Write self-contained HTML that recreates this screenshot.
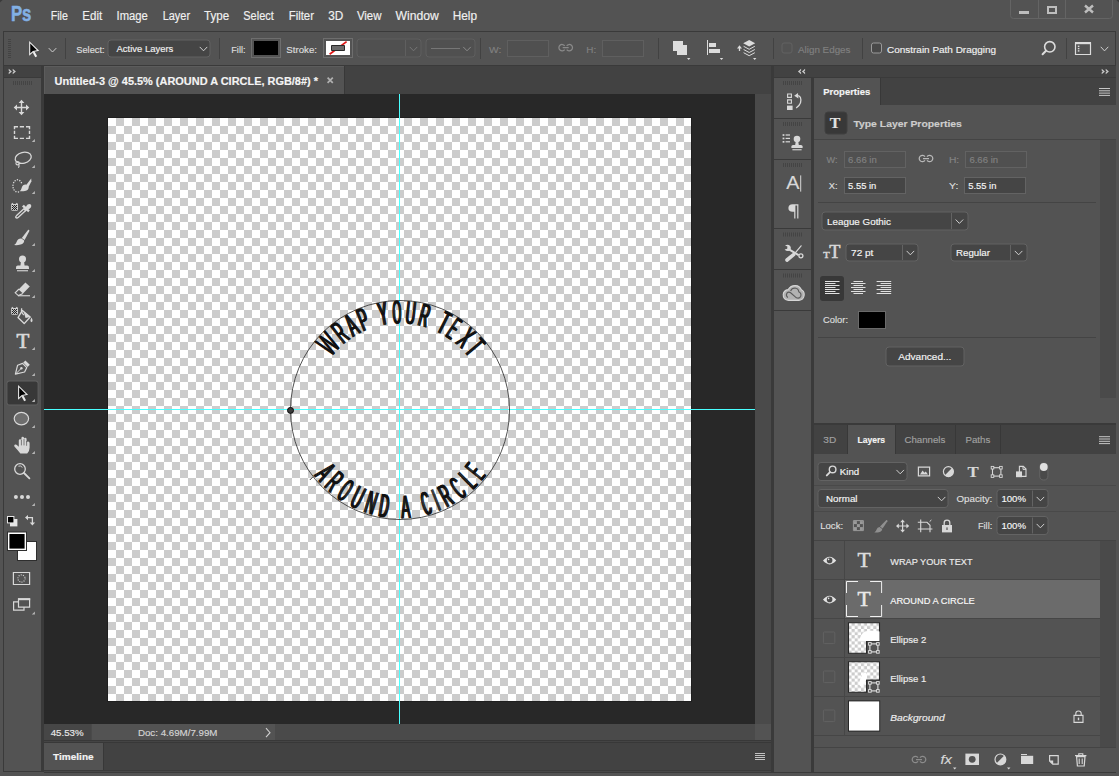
<!DOCTYPE html>
<html lang="en"><head><meta charset="utf-8"><title>Untitled-3 @ 45.5% (AROUND A CIRCLE, RGB/8#) *</title>
<style>
html,body{margin:0;padding:0;background:#535353;overflow:hidden}
#app{position:relative;width:1119px;height:776px;overflow:hidden;background:#535353;font-family:"Liberation Sans",sans-serif}
.p{position:absolute;overflow:hidden}
.p svg{display:block;position:absolute;left:0;top:0}
svg text{font-family:"Liberation Sans",sans-serif;white-space:pre}
svg text.serif{font-family:"Liberation Serif",serif}
.arc{position:absolute;left:0;top:0;width:0;height:0;color:#111;line-height:1;font-family:"Liberation Sans",sans-serif}
.arc span{position:absolute;left:0;top:0;display:block;white-space:pre;transform-origin:0 0}
.arc span.sp{width:0;height:0;overflow:hidden}
</style></head><body><div id="app">
<div class="p menubar" style="left:0px;top:0px;width:1119px;height:31px;background:#535353"><svg width="1119" height="31" viewBox="0 0 1119 31"><path d="M0 0 L2.6 0 L0 2.6 Z" fill="#3a3a3a" /><path d="M1119 0 L1116.4 0 L1119 2.6 Z" fill="#3a3a3a" /><text x="10.9" y="21.2" font-size="22.5" fill="#82b0e4" font-weight="bold" textLength="20.5" lengthAdjust="spacingAndGlyphs" stroke="#82b0e4" stroke-width="0.5">Ps</text><text x="50.7" y="20" font-size="12.3" fill="#f0f0f0" stroke="#f0f0f0" stroke-width="0.16" textLength="17.2" lengthAdjust="spacingAndGlyphs" >File</text><text x="82.3" y="20" font-size="12.3" fill="#f0f0f0" stroke="#f0f0f0" stroke-width="0.16" textLength="19.9" lengthAdjust="spacingAndGlyphs" >Edit</text><text x="116.6" y="20" font-size="12.3" fill="#f0f0f0" stroke="#f0f0f0" stroke-width="0.16" textLength="31.3" lengthAdjust="spacingAndGlyphs" >Image</text><text x="162.7" y="20" font-size="12.3" fill="#f0f0f0" stroke="#f0f0f0" stroke-width="0.16" textLength="27.4" lengthAdjust="spacingAndGlyphs" >Layer</text><text x="204.1" y="20" font-size="12.3" fill="#f0f0f0" stroke="#f0f0f0" stroke-width="0.16" textLength="25.1" lengthAdjust="spacingAndGlyphs" >Type</text><text x="243.3" y="20" font-size="12.3" fill="#f0f0f0" stroke="#f0f0f0" stroke-width="0.16" textLength="30.5" lengthAdjust="spacingAndGlyphs" >Select</text><text x="288.7" y="20" font-size="12.3" fill="#f0f0f0" stroke="#f0f0f0" stroke-width="0.16" textLength="25.3" lengthAdjust="spacingAndGlyphs" >Filter</text><text x="328.3" y="20" font-size="12.3" fill="#f0f0f0" stroke="#f0f0f0" stroke-width="0.16" textLength="15.1" lengthAdjust="spacingAndGlyphs" >3D</text><text x="356.9" y="20" font-size="12.3" fill="#f0f0f0" stroke="#f0f0f0" stroke-width="0.16" textLength="24.6" lengthAdjust="spacingAndGlyphs" >View</text><text x="395.5" y="20" font-size="12.3" fill="#f0f0f0" stroke="#f0f0f0" stroke-width="0.16" textLength="43.3" lengthAdjust="spacingAndGlyphs" >Window</text><text x="452.7" y="20" font-size="12.3" fill="#f0f0f0" stroke="#f0f0f0" stroke-width="0.16" textLength="24.3" lengthAdjust="spacingAndGlyphs" >Help</text><path d="M1010.5 0 V15.5 Q1010.5 18.5 1013.5 18.5 H1109.5 Q1112.5 18.5 1112.5 15.5 V0" fill="none" stroke="#646464" stroke-width="1" /><rect x="1038" y="0" width="1" height="18" fill="#646464"/><rect x="1065" y="0" width="1" height="18" fill="#646464"/><rect x="1019" y="11" width="10" height="3" fill="#bdbdbd" /><path d="M1048 7 H1056 V13 H1048 Z" fill="none" stroke="#bdbdbd" stroke-width="2" /><path d="M1085 5.5 L1093 12.5 M1093 5.5 L1085 12.5" fill="none" stroke="#bdbdbd" stroke-width="2.4" /></svg></div>
<div class="p optionsbar" style="left:0px;top:31px;width:1119px;height:35px;background:#535353"><svg width="1119" height="35" viewBox="0 31 1119 35"><rect x="3" y="31" width="1113" height="35" fill="#3a3a3a" /><rect x="4" y="32" width="1111" height="33" fill="#535353" /><rect x="8" y="39" width="3" height="1" fill="#434343" /><rect x="8" y="41" width="3" height="1" fill="#434343" /><rect x="8" y="43" width="3" height="1" fill="#434343" /><rect x="8" y="45" width="3" height="1" fill="#434343" /><rect x="8" y="47" width="3" height="1" fill="#434343" /><rect x="8" y="49" width="3" height="1" fill="#434343" /><rect x="8" y="51" width="3" height="1" fill="#434343" /><rect x="8" y="53" width="3" height="1" fill="#434343" /><rect x="8" y="55" width="3" height="1" fill="#434343" /><rect x="8" y="57" width="3" height="1" fill="#434343" /><path d="M33.6 52 L36.2 56.8" stroke="#efefef" stroke-width="2.1" fill="none"/><path d="M29.7 42.2 V54.6 L33.1 51.5 L38.1 50.5 Z" fill="#000" stroke="#efefef" stroke-width="1.1" stroke-linejoin="miter"/><path d="M49 48.4 L52.5 52 L56 48.4" fill="none" stroke="#cfcfcf" stroke-width="1" stroke-linecap="round" stroke-linejoin="round"/><rect x="65" y="38" width="1" height="21" fill="#424242"/><rect x="219" y="38" width="1" height="21" fill="#424242"/><rect x="480" y="38" width="1" height="21" fill="#424242"/><rect x="658" y="38" width="1" height="21" fill="#424242"/><rect x="773" y="38" width="1" height="21" fill="#424242"/><rect x="862" y="38" width="1" height="21" fill="#424242"/><rect x="1066" y="38" width="1" height="21" fill="#424242"/><text x="76.2" y="52.5" font-size="9.7" fill="#dddddd" stroke="#dddddd" stroke-width="0.16" textLength="28.5" lengthAdjust="spacingAndGlyphs" >Select:</text><rect x="108" y="40" width="102" height="17" rx="3" fill="#454545" stroke="#636363" stroke-width="1" /><text x="116.5" y="52.3" font-size="9.7" fill="#f0f0f0" stroke="#f0f0f0" stroke-width="0.16" textLength="56.8" lengthAdjust="spacingAndGlyphs" >Active Layers</text><path d="M200 47.2 L203.5 50.8 L207 47.2" fill="none" stroke="#cfcfcf" stroke-width="1" stroke-linecap="round" stroke-linejoin="round"/><text x="231.3" y="52.5" font-size="9.7" fill="#dddddd" stroke="#dddddd" stroke-width="0.16" textLength="14.2" lengthAdjust="spacingAndGlyphs" >Fill:</text><rect x="251.5" y="38.5" width="29" height="19" rx="0" fill="none" stroke="#6e6e6e" stroke-width="1" /><rect x="254" y="41" width="24" height="14" fill="#000" /><text x="286.3" y="52.5" font-size="9.7" fill="#dddddd" stroke="#dddddd" stroke-width="0.16" textLength="30.7" lengthAdjust="spacingAndGlyphs" >Stroke:</text><rect x="323.5" y="38.5" width="29" height="19" rx="0" fill="none" stroke="#6e6e6e" stroke-width="1" /><rect x="326" y="41" width="24" height="14" fill="#fff" /><path d="M329.6 54.2 L346.6 41.6" fill="none" stroke="#e01818" stroke-width="1.8" /><path d="M331.5 45.5 H344.5 V50.5 H331.5 Z" fill="#6b6b6b" stroke="#2a2a2a" stroke-width="1" /><rect x="357" y="39" width="64" height="18" rx="3" fill="#505050" stroke="#5f5f5f" stroke-width="1" /><rect x="405" y="40" width="1" height="16" fill="#5f5f5f"/><path d="M410 47.2 L413.5 50.8 L417 47.2" fill="none" stroke="#767676" stroke-width="1" stroke-linecap="round" stroke-linejoin="round"/><rect x="426" y="39" width="49" height="18" rx="3" fill="#505050" stroke="#5f5f5f" stroke-width="1" /><rect x="431" y="48" width="29" height="1" fill="#767676"/><path d="M463.5 47.2 L467 50.8 L470.5 47.2" fill="none" stroke="#8a8a8a" stroke-width="1" stroke-linecap="round" stroke-linejoin="round"/><text x="489" y="52.5" font-size="9.7" fill="#808080" stroke="#808080" stroke-width="0.16" textLength="12.3" lengthAdjust="spacingAndGlyphs" >W:</text><rect x="507.5" y="40.5" width="41" height="16" rx="0" fill="#505050" stroke="#5f5f5f" stroke-width="1" /><path d="M564.7 45.8 A3.2 3.2 0 1 0 564.7 49.6 M566.7 45.8 A3.2 3.2 0 1 1 566.7 49.6 M562.7 47.7 H568.7" fill="none" stroke="#8a8a8a" stroke-width="1.25"/><text x="586.3" y="52.5" font-size="9.7" fill="#808080" stroke="#808080" stroke-width="0.16" textLength="9.9" lengthAdjust="spacingAndGlyphs" >H:</text><rect x="602.5" y="40.5" width="41" height="16" rx="0" fill="#505050" stroke="#5f5f5f" stroke-width="1" /><rect x="673" y="41" width="10" height="10" fill="#dcdcdc" /><rect x="677" y="45" width="10" height="10" fill="#dcdcdc" /><path d="M687 58 L690.4 58 L688.7 60 Z" fill="#dcdcdc" /><rect x="707" y="40" width="1" height="15" fill="#dcdcdc"/><rect x="709" y="43" width="7" height="4" fill="#dcdcdc" /><rect x="709" y="49" width="11" height="4" fill="#dcdcdc" /><path d="M719.8 58 L723.2 58 L721.5 60 Z" fill="#dcdcdc" /><path d="M739.5 51 V47.5" fill="none" stroke="#dcdcdc" stroke-width="1.3" /><path d="M739.5 45.2 L742 48.4 H737 Z" fill="#dcdcdc" /><path d="M749.2 40 L755.2 43.2 L749.2 46.4 L743.2 43.2 Z" fill="#dcdcdc" /><path d="M743.6 46.3 L749.2 49.3 L754.8 46.3 M743.6 49.5 L749.2 52.5 L754.8 49.5 M743.6 52.7 L749.2 55.7 L754.8 52.7" fill="none" stroke="#dcdcdc" stroke-width="1" /><path d="M753 58 L756.4 58 L754.7 60 Z" fill="#dcdcdc" /><rect x="782" y="43" width="10" height="10" rx="2" fill="none" stroke="#626262" stroke-width="1" /><text x="798" y="52.5" font-size="9.7" fill="#808080" stroke="#808080" stroke-width="0.16" textLength="52.5" lengthAdjust="spacingAndGlyphs" >Align Edges</text><rect x="871.5" y="43" width="10" height="10" rx="2" fill="#484848" stroke="#9a9a9a" stroke-width="1" /><text x="887" y="52.5" font-size="9.7" fill="#f0f0f0" stroke="#f0f0f0" stroke-width="0.16" textLength="109.1" lengthAdjust="spacingAndGlyphs" >Constrain Path Dragging</text><circle cx="1049.8" cy="46.8" r="5.2" fill="none" stroke="#dcdcdc" stroke-width="1.6"/><path d="M1046 50.8 L1042.6 54.3" fill="none" stroke="#dcdcdc" stroke-width="2" stroke-linecap="round"/><path d="M1075.5 43 H1090.5 V54.5 H1075.5 Z" fill="none" stroke="#dcdcdc" stroke-width="1.2" /><rect x="1075" y="42" width="16" height="2.2" fill="#dcdcdc" /><rect x="1077.8" y="45.6" width="1.6" height="1.4" fill="#dcdcdc" /><rect x="1077.8" y="47.9" width="1.6" height="1.4" fill="#dcdcdc" /><rect x="1077.8" y="50.2" width="1.6" height="1.4" fill="#dcdcdc" /><path d="M1101 47.1 L1104.5 50.9 L1108 47.1" fill="none" stroke="#cfcfcf" stroke-width="1" stroke-linecap="round" stroke-linejoin="round"/></svg></div>
<div class="p toolbar" style="left:0px;top:66px;width:44px;height:710px;background:#535353"><svg width="44" height="710" viewBox="0 66 44 710"><rect x="3" y="66" width="41" height="706" fill="#3a3a3a" /><rect x="0" y="66" width="3" height="710" fill="#535353" /><rect x="4" y="66" width="37" height="11" fill="#424242" /><rect x="4" y="78" width="37" height="693" fill="#535353" /><path d="M11.9 71.5 L8.7 68.8 V70.6 L9.8 71.5 L8.7 72.4 V74.2 Z M15.9 71.5 L12.7 68.8 V70.6 L13.8 71.5 L12.7 72.4 V74.2 Z " fill="#c8c8c8"/><rect x="13" y="81" width="1" height="4" fill="#444444"/><rect x="15" y="81" width="1" height="4" fill="#444444"/><rect x="17" y="81" width="1" height="4" fill="#444444"/><rect x="19" y="81" width="1" height="4" fill="#444444"/><rect x="21" y="81" width="1" height="4" fill="#444444"/><rect x="23" y="81" width="1" height="4" fill="#444444"/><rect x="25" y="81" width="1" height="4" fill="#444444"/><rect x="27" y="81" width="1" height="4" fill="#444444"/><rect x="29" y="81" width="1" height="4" fill="#444444"/><rect x="31" y="81" width="1" height="4" fill="#444444"/><path d="M21.5 101.3 V113.7 M15.3 107.5 H27.7" fill="none" stroke="#d8d8d8" stroke-width="1.4" /><path d="M21.5 99.7 l2.9 3.3 h-5.8 Z M21.5 115.3 l2.9 -3.3 h-5.8 Z M13.7 107.5 l3.3 -2.9 v5.8 Z M29.3 107.5 l-3.3 -2.9 v5.8 Z" fill="#d8d8d8" /><path d="M14.5 129.3 V126.7 H18.0 M19.8 126.7 H24.0 M26.0 126.7 H29.5 V129.3 M29.5 130.8 V134.0 M29.5 135.8 V138.4 H26.0 M24.0 138.4 H19.8 M18.0 138.4 H14.5 V135.8 M14.5 134.0 V130.8" fill="none" stroke="#d8d8d8" stroke-width="1.4" /><path d="M34.9 139 L34.9 142.1 L31.8 142.1 Z" fill="#b8b8b8" /><ellipse cx="23.2" cy="157.8" rx="8.2" ry="5.4" fill="none" stroke="#d8d8d8" stroke-width="1.3" transform="rotate(-14 23.2 157.8)"/><circle cx="17.6" cy="163.2" r="1.7" fill="none" stroke="#d8d8d8" stroke-width="1.1"/><path d="M18.8 164.4 Q19.6 166 18.4 167.8" fill="none" stroke="#d8d8d8" stroke-width="1.1" /><path d="M34.9 165 L34.9 168.1 L31.8 168.1 Z" fill="#b8b8b8" /><path d="M21.4 182.6 A4.6 6.1 0 1 0 19.6 191.4" fill="none" stroke="#d8d8d8" stroke-width="1.5" stroke-dasharray="0.01 2.45" stroke-linecap="round"/><path d="M31.2 178.6 L31.4 181.2 L28.6 187 L26 185.2 Z" fill="#d8d8d8" /><path d="M26 184.6 L28.8 186.8 Q28.6 190.6 25 191 Q22 191.6 19.6 191.2 Q21.4 190 21.8 187.6 Q22.6 184.4 26 184.6 Z" fill="#d8d8d8" /><path d="M34.9 191 L34.9 194.1 L31.8 194.1 Z" fill="#b8b8b8" /><path d="M11.2 204.0 L12.399999999999999 202.8 L13.6 204.0 H15.6 L16.799999999999997 202.8 L18.0 204.0 V209.4 Q18.0 210.8 16.6 210.8 H12.6 Q11.2 210.8 11.2 209.4 Z" fill="#d0d0d0"/><rect x="12.1" y="205" width="1" height="1" fill="#111"/><rect x="12.1" y="207" width="1" height="1" fill="#111"/><rect x="12.1" y="209" width="1" height="1" fill="#111"/><rect x="13.1" y="206" width="1" height="1" fill="#111"/><rect x="13.1" y="208" width="1" height="1" fill="#111"/><rect x="14.1" y="205" width="1" height="1" fill="#111"/><rect x="14.1" y="207" width="1" height="1" fill="#111"/><rect x="14.1" y="209" width="1" height="1" fill="#111"/><rect x="15.1" y="206" width="1" height="1" fill="#111"/><rect x="15.1" y="208" width="1" height="1" fill="#111"/><rect x="16.1" y="205" width="1" height="1" fill="#111"/><rect x="16.1" y="207" width="1" height="1" fill="#111"/><rect x="16.1" y="209" width="1" height="1" fill="#111"/><path d="M24.2 208.6 L16.6 215.6 Q15.2 217 16 217.8 Q17 218.4 18.4 217.2 L26 210.2" fill="none" stroke="#d8d8d8" stroke-width="1.3" stroke-linejoin="round"/><path d="M22 206.4 L23.8 204.8 L29.8 210.4 L28.2 212.2 Z" fill="#d8d8d8" /><path d="M23.4 209.4 L26.2 206.4 L28.4 208.6 L25.6 211.6 Z" fill="#d8d8d8" /><path d="M26 206.6 L27.6 204.6 Q29.4 203.2 30.8 204.6 Q32 206 30.6 207.8 L28.6 209.4 Z" fill="#d8d8d8" /><path d="M28.2 229.8 Q29.4 229.6 29.4 231 L24.6 240 L21.8 238 Z" fill="#d8d8d8" /><path d="M21.4 238.4 L24.2 240.6 Q24.2 243.6 20.6 244.6 Q17 245.4 14.2 245 Q16.2 243.8 16.8 241.6 Q17.8 238.2 21.4 238.4 Z" fill="#d8d8d8" /><path d="M34.9 243 L34.9 246.1 L31.8 246.1 Z" fill="#b8b8b8" /><circle cx="22.5" cy="258.9" r="3.5" fill="#d8d8d8"/><path d="M21 261 H24 L24.6 266 H20.4 Z" fill="#d8d8d8" /><path d="M16 269 V267.4 Q16 265.6 17.8 265.6 H27.2 Q29 265.6 29 267.4 V269 Z" fill="#d8d8d8" /><rect x="17" y="270.2" width="11" height="1.1" fill="#d8d8d8" /><path d="M34.9 269 L34.9 272.1 L31.8 272.1 Z" fill="#b8b8b8" /><path d="M25.4 282.4 L29.8 286.6 L23 293.6 L18.6 289.4 Z" fill="#d8d8d8" /><path d="M19 289 L15.2 292.8 L18.4 295.6 L23 293.4" fill="none" stroke="#d8d8d8" stroke-width="1.1" /><rect x="18" y="295.2" width="12" height="1.1" fill="#d8d8d8" /><path d="M34.9 295 L34.9 298.1 L31.8 298.1 Z" fill="#b8b8b8" /><path d="M11.2 308.0 L12.399999999999999 306.8 L13.6 308.0 H15.6 L16.799999999999997 306.8 L18.0 308.0 V313.40000000000003 Q18.0 314.8 16.6 314.8 H12.6 Q11.2 314.8 11.2 313.40000000000003 Z" fill="#d0d0d0"/><rect x="12.1" y="309" width="1" height="1" fill="#111"/><rect x="12.1" y="311" width="1" height="1" fill="#111"/><rect x="12.1" y="313" width="1" height="1" fill="#111"/><rect x="13.1" y="310" width="1" height="1" fill="#111"/><rect x="13.1" y="312" width="1" height="1" fill="#111"/><rect x="14.1" y="309" width="1" height="1" fill="#111"/><rect x="14.1" y="311" width="1" height="1" fill="#111"/><rect x="14.1" y="313" width="1" height="1" fill="#111"/><rect x="15.1" y="310" width="1" height="1" fill="#111"/><rect x="15.1" y="312" width="1" height="1" fill="#111"/><rect x="16.1" y="309" width="1" height="1" fill="#111"/><rect x="16.1" y="311" width="1" height="1" fill="#111"/><rect x="16.1" y="313" width="1" height="1" fill="#111"/><path d="M22.4 310.4 L30.2 317 L24.2 323.6 L18 317.6 Z" fill="none" stroke="#d8d8d8" stroke-width="1.35" stroke-linejoin="round"/><path d="M21.8 308.2 Q20.4 311.6 23.8 315" fill="none" stroke="#d8d8d8" stroke-width="1.2" /><path d="M23.4 311.2 L30.4 317 L25.6 318 Z" fill="#d8d8d8" /><path d="M31.5 317.4 Q33.6 321 31.5 322.2 Q29.4 321 31.5 317.4 Z" fill="#d8d8d8" /><text x="16.6" y="348" font-size="20.2" fill="#d8d8d8" class="serif" textLength="12.8" lengthAdjust="spacingAndGlyphs" stroke="#d8d8d8" stroke-width="0.7">T</text><path d="M34.9 347 L34.9 350.1 L31.8 350.1 Z" fill="#b8b8b8" /><path d="M25.4 360.4 L29.8 364.8 L27.6 367 L23.2 362.6 Z" fill="#d8d8d8" /><path d="M22.6 363.4 L26.8 367.6 L24.6 372 L15.4 374.2 L17.6 365.2 Z" fill="none" stroke="#d8d8d8" stroke-width="1.2" stroke-linejoin="round"/><path d="M15.8 373.8 L20.8 368.8" fill="none" stroke="#d8d8d8" stroke-width="1" /><circle cx="21.4" cy="368.2" r="1.2" fill="#d8d8d8"/><path d="M34.9 373 L34.9 376.1 L31.8 376.1 Z" fill="#b8b8b8" /><rect x="6.6" y="380.6" width="31.8" height="24.8" rx="3" fill="#626262" /><rect x="7.4" y="381.4" width="30.2" height="23.2" rx="2.2" fill="#383838" /><path d="M22.5 396 L25.1 400.8" stroke="#e6e6e6" stroke-width="2.1" fill="none"/><path d="M18.6 386.2 V398.6 L22 395.5 L27 394.5 Z" fill="#000" stroke="#e6e6e6" stroke-width="1.1" stroke-linejoin="miter"/><path d="M34.9 399 L34.9 402.1 L31.8 402.1 Z" fill="#b8b8b8" /><ellipse cx="21.4" cy="418.6" rx="7.2" ry="6.2" fill="#6e6e6e" stroke="#d8d8d8" stroke-width="1.2"/><path d="M34.9 425 L34.9 428.1 L31.8 428.1 Z" fill="#b8b8b8" /><path d="M18.8 446.8 V440.6 Q18.8 439.2 20.1 439.2 Q21.4 439.2 21.4 440.6 V438.2 Q21.4 436.8 22.7 436.8 Q24 436.8 24 438.2 V439.2 Q24 437.8 25.3 437.8 Q26.6 437.8 26.6 439.2 V442.8 Q26.8 441.6 28.2 441.6 Q29.6 441.8 29.6 443.2 V447.4 Q29.6 451.2 27.2 453.6 H20.4 Q18.4 451 14.4 446.6 Q13.8 445.2 15 444.6 Q16.2 444.2 17.4 445.4 Z" fill="#d8d8d8" /><path d="M21.4 440 V445.4 M24 439 V445.4 M26.6 441 V445.8" fill="none" stroke="#535353" stroke-width="0.7" /><path d="M34.9 451 L34.9 454.1 L31.8 454.1 Z" fill="#b8b8b8" /><circle cx="20" cy="469" r="5.3" fill="none" stroke="#d8d8d8" stroke-width="1.3"/><path d="M18.4 466.2 Q20.6 465.2 22.4 467.4" fill="none" stroke="#d8d8d8" stroke-width="0.9" /><path d="M24 473 L29.4 478.4" fill="none" stroke="#d8d8d8" stroke-width="1.8" stroke-linecap="round"/><circle cx="15.9" cy="497" r="2" fill="#d8d8d8"/><circle cx="22" cy="497" r="2" fill="#d8d8d8"/><circle cx="28" cy="497" r="2" fill="#d8d8d8"/><path d="M34.9 503 L34.9 506.1 L31.8 506.1 Z" fill="#b8b8b8" /><rect x="10" y="519" width="7.4" height="7.4" fill="#e6e6e6" /><rect x="7" y="516" width="7.4" height="7.4" fill="#e6e6e6" /><rect x="8" y="517" width="5.4" height="5.4" fill="#000" /><path d="M27.4 517.6 H32.4 V523.4" fill="none" stroke="#d8d8d8" stroke-width="1.3" /><path d="M25 517.6 l3 -2.7 v5.4 Z M32.4 525.6 l-2.7 -3 h5.4 Z" fill="#d8d8d8" /><rect x="17" y="541" width="20" height="20" fill="#2e2e2e" /><rect x="18" y="542" width="18" height="18" fill="#ffffff" /><rect x="7" y="531.5" width="20" height="19.5" fill="#2e2e2e" /><rect x="8" y="532.5" width="18" height="17.5" fill="#ffffff" /><rect x="9.4" y="534" width="15.2" height="14.6" fill="#000" /><path d="M13.4 572.5 H29.6 V584.5 H13.4 Z" fill="none" stroke="#d8d8d8" stroke-width="1.2" /><circle cx="21.5" cy="578.5" r="3.6" fill="none" stroke="#d8d8d8" stroke-width="1.1" stroke-dasharray="1 1.25"/><path d="M13.6 601.9 H24 V610.2 H13.6 Z" fill="none" stroke="#d8d8d8" stroke-width="1.2" /><path d="M18.5 598.9 H29.6 V607.1 H18.5 Z" fill="#535353" stroke="#d8d8d8" stroke-width="1.2" /><rect x="18" y="598.3" width="12.2" height="1.9" fill="#d8d8d8" /><path d="M34.9 611.4 L34.9 614.5 L31.8 614.5 Z" fill="#b8b8b8" /></svg></div>
<div class="p doctabs" style="left:44px;top:66px;width:727px;height:28px;background:#424242"><svg width="727" height="28" viewBox="44 66 727 28"><rect x="44" y="66" width="727" height="28" fill="#424242" /><rect x="44" y="66" width="300" height="28" fill="#535353" /><rect x="344" y="66" width="1" height="28" fill="#383838"/><rect x="44" y="66" width="300" height="1" fill="#5c5c5c"/><rect x="44" y="66" width="1" height="28" fill="#5c5c5c"/><text x="54.6" y="85" font-size="11.4" fill="#f4f4f4" font-weight="bold" stroke="#f4f4f4" stroke-width="0.16" textLength="263.4" lengthAdjust="spacingAndGlyphs" >Untitled-3 @ 45.5% (AROUND A CIRCLE, RGB/8#) *</text><path d="M327.6 77.6 L332.8 82.8 M332.8 77.6 L327.6 82.8" fill="none" stroke="#b0b0b0" stroke-width="1.7" /></svg></div>
<div class="p canvas" style="left:44px;top:94px;width:727px;height:630px;background:#282828"><svg width="727" height="630" viewBox="44 94 727 630"><defs><pattern id="chk" x="108" y="118" width="16" height="16" patternUnits="userSpaceOnUse"><rect width="16" height="16" fill="#ffffff"/><rect x="8" width="8" height="8" fill="#cccccc"/><rect y="8" width="8" height="8" fill="#cccccc"/></pattern></defs><rect x="44" y="94" width="711" height="630" fill="#282828" /><rect x="107" y="117" width="585" height="585" fill="#1f1f1f" /><rect x="108" y="118" width="583" height="583" fill="url(#chk)" /><rect x="399" y="94" width="1" height="630" fill="#4affff" /><rect x="44" y="409" width="711" height="1" fill="#4affff" /><circle cx="400.0" cy="410.0" r="109.5" fill="none" stroke="#3c3c3c" stroke-width="0.9"/><path d="M309.8 480.0 L312.6 477.2" fill="none" stroke="#222" stroke-width="0.9" /><circle cx="290.5" cy="410.4" r="3" fill="#3c3c3c" stroke="#0a0a0a" stroke-width="1"/><rect x="755" y="94" width="16" height="630" fill="#4a4a4a" /></svg><div class="arc" style="font-size:33px" title="WRAP YOUR TEXT"><span style="transform:translate(356px,316px) rotate(-47.4deg) translate(0,-86.4px) scaleX(0.4930) translate(-15.59px,-28.00px);text-shadow:1.21px 0 0 #111,-1.21px 0 0 #111">W</span><span style="transform:translate(356px,316px) rotate(-37.6deg) translate(0,-86.4px) scaleX(0.3935) translate(-12.49px,-28.00px);text-shadow:2.16px 0 0 #111,-2.16px 0 0 #111">R</span><span style="transform:translate(356px,316px) rotate(-29.7deg) translate(0,-86.4px) scaleX(0.4068) translate(-11.01px,-28.00px);text-shadow:2.09px 0 0 #111,-2.09px 0 0 #111">A</span><span style="transform:translate(356px,316px) rotate(-22deg) translate(0,-86.4px) scaleX(0.4158) translate(-11.48px,-28.00px);text-shadow:2.04px 0 0 #111,-2.04px 0 0 #111">P</span><span class="sp"> </span><span style="transform:translate(356px,316px) rotate(-10deg) translate(0,-86.4px) scaleX(0.4232) translate(-11.01px,-28.00px);text-shadow:2.01px 0 0 #111,-2.01px 0 0 #111">Y</span><span style="transform:translate(356px,316px) rotate(-1.8deg) translate(0,-86.4px) scaleX(0.3328) translate(-12.82px,-28.00px);text-shadow:2.55px 0 0 #111,-2.55px 0 0 #111">O</span><span style="transform:translate(356px,316px) rotate(6.3deg) translate(0,-86.4px) scaleX(0.4001) translate(-11.91px,-28.00px);text-shadow:2.12px 0 0 #111,-2.12px 0 0 #111">U</span><span style="transform:translate(356px,316px) rotate(14.7deg) translate(0,-86.4px) scaleX(0.3935) translate(-12.49px,-28.00px);text-shadow:2.16px 0 0 #111,-2.16px 0 0 #111">R</span><span class="sp"> </span><span style="transform:translate(356px,316px) rotate(26.8deg) translate(0,-86.4px) scaleX(0.4122) translate(-10.06px,-28.00px);text-shadow:2.06px 0 0 #111,-2.06px 0 0 #111">T</span><span style="transform:translate(356px,316px) rotate(33.6deg) translate(0,-86.4px) scaleX(0.3299) translate(-11.65px,-28.00px);text-shadow:2.58px 0 0 #111,-2.58px 0 0 #111">E</span><span style="transform:translate(356px,316px) rotate(42.4deg) translate(0,-86.4px) scaleX(0.4232) translate(-11.04px,-28.00px);text-shadow:2.01px 0 0 #111,-2.01px 0 0 #111">X</span><span style="transform:translate(356px,316px) rotate(50deg) translate(0,-86.4px) scaleX(0.4122) translate(-10.06px,-28.00px);text-shadow:2.06px 0 0 #111,-2.06px 0 0 #111">T</span></div><div class="arc" style="font-size:33px" title="AROUND A CIRCLE"><span style="transform:translate(356px,316px) rotate(50.2deg) translate(0,108.4px) scaleX(0.4068) translate(-11.01px,-28.00px);text-shadow:2.09px 0 0 #111,-2.09px 0 0 #111">A</span><span style="transform:translate(356px,316px) rotate(42.4deg) translate(0,108.4px) scaleX(0.3935) translate(-12.49px,-28.00px);text-shadow:2.16px 0 0 #111,-2.16px 0 0 #111">R</span><span style="transform:translate(356px,316px) rotate(34.1deg) translate(0,108.4px) scaleX(0.3328) translate(-12.82px,-28.00px);text-shadow:2.55px 0 0 #111,-2.55px 0 0 #111">O</span><span style="transform:translate(356px,316px) rotate(25.7deg) translate(0,108.4px) scaleX(0.4001) translate(-11.91px,-28.00px);text-shadow:2.12px 0 0 #111,-2.12px 0 0 #111">U</span><span style="transform:translate(356px,316px) rotate(17.2deg) translate(0,108.4px) scaleX(0.4174) translate(-11.93px,-28.00px);text-shadow:2.04px 0 0 #111,-2.04px 0 0 #111">N</span><span style="transform:translate(356px,316px) rotate(9.2deg) translate(0,108.4px) scaleX(0.3839) translate(-12.47px,-28.00px);text-shadow:2.21px 0 0 #111,-2.21px 0 0 #111">D</span><span class="sp"> </span><span style="transform:translate(356px,316px) rotate(-3.3deg) translate(0,108.4px) scaleX(0.4068) translate(-11.01px,-28.00px);text-shadow:2.09px 0 0 #111,-2.09px 0 0 #111">A</span><span class="sp"> </span><span style="transform:translate(356px,316px) rotate(-15.6deg) translate(0,108.4px) scaleX(0.3495) translate(-12.13px,-28.00px);text-shadow:2.43px 0 0 #111,-2.43px 0 0 #111">C</span><span style="transform:translate(356px,316px) rotate(-21.8deg) translate(0,108.4px) scaleX(0.2901) translate(-4.59px,-28.00px);text-shadow:2.93px 0 0 #111,-2.93px 0 0 #111">I</span><span style="transform:translate(356px,316px) rotate(-28.3deg) translate(0,108.4px) scaleX(0.3935) translate(-12.49px,-28.00px);text-shadow:2.16px 0 0 #111,-2.16px 0 0 #111">R</span><span style="transform:translate(356px,316px) rotate(-36.5deg) translate(0,108.4px) scaleX(0.3495) translate(-12.13px,-28.00px);text-shadow:2.43px 0 0 #111,-2.43px 0 0 #111">C</span><span style="transform:translate(356px,316px) rotate(-44.4deg) translate(0,108.4px) scaleX(0.3917) translate(-9.98px,-28.00px);text-shadow:2.17px 0 0 #111,-2.17px 0 0 #111">L</span><span style="transform:translate(356px,316px) rotate(-51deg) translate(0,108.4px) scaleX(0.3299) translate(-11.65px,-28.00px);text-shadow:2.58px 0 0 #111,-2.58px 0 0 #111">E</span></div></div>
<div class="p statusbar" style="left:44px;top:724px;width:727px;height:19px;background:#4a4a4a"><svg width="727" height="19" viewBox="44 724 727 19"><rect x="44" y="724" width="727" height="16" fill="#4a4a4a" /><rect x="44" y="724" width="47" height="16" fill="#464646" /><rect x="92" y="724" width="183" height="16" fill="#535353" /><rect x="755" y="724" width="16" height="16" fill="#535353" /><text x="50.7" y="735.5" font-size="9.7" fill="#e8e8e8" stroke="#e8e8e8" stroke-width="0.16" textLength="32.9" lengthAdjust="spacingAndGlyphs" >45.53%</text><text x="137.9" y="736" font-size="9.7" fill="#d4d4d4" stroke="#d4d4d4" stroke-width="0.16" textLength="79.6" lengthAdjust="spacingAndGlyphs" >Doc: 4.69M/7.99M</text><path d="M266 728.2 L270 732.7 L266 737.2" fill="none" stroke="#cfcfcf" stroke-width="1.1" /><rect x="44" y="740" width="727" height="3" fill="#383838" /><rect x="44" y="741" width="727" height="1" fill="#444444"/></svg></div>
<div class="p timeline" style="left:44px;top:743px;width:727px;height:33px;background:#424242"><svg width="727" height="33" viewBox="44 743 727 33"><rect x="44" y="743" width="727" height="29" fill="#424242" /><rect x="44" y="743" width="59" height="29" fill="#535353" /><rect x="103" y="743" width="1" height="29" fill="#383838"/><text x="53.1" y="760.4" font-size="9.6" fill="#f4f4f4" font-weight="bold" stroke="#f4f4f4" stroke-width="0.16" textLength="40.5" lengthAdjust="spacingAndGlyphs" >Timeline</text><rect x="755" y="753" width="10" height="1" fill="#c2c2c2" /><rect x="755" y="755" width="10" height="1" fill="#c2c2c2" /><rect x="755" y="757" width="10" height="1" fill="#c2c2c2" /><rect x="755" y="759" width="10" height="1" fill="#c2c2c2" /><rect x="44" y="773" width="727" height="3" fill="#535353" /><rect x="44" y="770" width="727" height="3" fill="#3a3a3a" /><rect x="44" y="771" width="727" height="1" fill="#474747"/></svg></div>
<div class="p dock" style="left:771px;top:66px;width:348px;height:710px;background:#3a3a3a"><svg width="348" height="710" viewBox="771 66 348 710"><rect x="771" y="66" width="345" height="710" fill="#3a3a3a" /><rect x="1116" y="66" width="3" height="710" fill="#535353" /><rect x="771" y="773" width="348" height="3" fill="#535353" /><rect x="774" y="66" width="342" height="11" fill="#424242" /><path d="M797.9 71.5 L801.1 68.8 V70.6 L800 71.5 L801.1 72.4 V74.2 Z M801.9 71.5 L805.1 68.8 V70.6 L804 71.5 L805.1 72.4 V74.2 Z " fill="#c8c8c8"/><path d="M1104.9 71.5 L1101.7 68.8 V70.6 L1102.8 71.5 L1101.7 72.4 V74.2 Z M1108.9 71.5 L1105.7 68.8 V70.6 L1106.8 71.5 L1105.7 72.4 V74.2 Z " fill="#c8c8c8"/><rect x="774" y="78" width="37" height="40" fill="#535353" /><rect x="774" y="119" width="37" height="40" fill="#535353" /><rect x="774" y="160" width="37" height="68" fill="#535353" /><rect x="774" y="229" width="37" height="40" fill="#535353" /><rect x="774" y="270" width="37" height="40" fill="#535353" /><rect x="774" y="311" width="37" height="461" fill="#535353" /><rect x="783" y="81" width="1" height="4" fill="#444444"/><rect x="785" y="81" width="1" height="4" fill="#444444"/><rect x="787" y="81" width="1" height="4" fill="#444444"/><rect x="789" y="81" width="1" height="4" fill="#444444"/><rect x="791" y="81" width="1" height="4" fill="#444444"/><rect x="793" y="81" width="1" height="4" fill="#444444"/><rect x="795" y="81" width="1" height="4" fill="#444444"/><rect x="797" y="81" width="1" height="4" fill="#444444"/><rect x="799" y="81" width="1" height="4" fill="#444444"/><rect x="801" y="81" width="1" height="4" fill="#444444"/><rect x="783" y="122" width="1" height="4" fill="#444444"/><rect x="785" y="122" width="1" height="4" fill="#444444"/><rect x="787" y="122" width="1" height="4" fill="#444444"/><rect x="789" y="122" width="1" height="4" fill="#444444"/><rect x="791" y="122" width="1" height="4" fill="#444444"/><rect x="793" y="122" width="1" height="4" fill="#444444"/><rect x="795" y="122" width="1" height="4" fill="#444444"/><rect x="797" y="122" width="1" height="4" fill="#444444"/><rect x="799" y="122" width="1" height="4" fill="#444444"/><rect x="801" y="122" width="1" height="4" fill="#444444"/><rect x="783" y="163" width="1" height="4" fill="#444444"/><rect x="785" y="163" width="1" height="4" fill="#444444"/><rect x="787" y="163" width="1" height="4" fill="#444444"/><rect x="789" y="163" width="1" height="4" fill="#444444"/><rect x="791" y="163" width="1" height="4" fill="#444444"/><rect x="793" y="163" width="1" height="4" fill="#444444"/><rect x="795" y="163" width="1" height="4" fill="#444444"/><rect x="797" y="163" width="1" height="4" fill="#444444"/><rect x="799" y="163" width="1" height="4" fill="#444444"/><rect x="801" y="163" width="1" height="4" fill="#444444"/><rect x="783" y="232.5" width="1" height="4" fill="#444444"/><rect x="785" y="232.5" width="1" height="4" fill="#444444"/><rect x="787" y="232.5" width="1" height="4" fill="#444444"/><rect x="789" y="232.5" width="1" height="4" fill="#444444"/><rect x="791" y="232.5" width="1" height="4" fill="#444444"/><rect x="793" y="232.5" width="1" height="4" fill="#444444"/><rect x="795" y="232.5" width="1" height="4" fill="#444444"/><rect x="797" y="232.5" width="1" height="4" fill="#444444"/><rect x="799" y="232.5" width="1" height="4" fill="#444444"/><rect x="801" y="232.5" width="1" height="4" fill="#444444"/><rect x="783" y="273.5" width="1" height="4" fill="#444444"/><rect x="785" y="273.5" width="1" height="4" fill="#444444"/><rect x="787" y="273.5" width="1" height="4" fill="#444444"/><rect x="789" y="273.5" width="1" height="4" fill="#444444"/><rect x="791" y="273.5" width="1" height="4" fill="#444444"/><rect x="793" y="273.5" width="1" height="4" fill="#444444"/><rect x="795" y="273.5" width="1" height="4" fill="#444444"/><rect x="797" y="273.5" width="1" height="4" fill="#444444"/><rect x="799" y="273.5" width="1" height="4" fill="#444444"/><rect x="801" y="273.5" width="1" height="4" fill="#444444"/><path d="M787.6 94.0 h3.8 v3.4 h-3.8 Z" fill="none" stroke="#d8d8d8" stroke-width="1.1" /><path d="M787.6 99.89999999999999 h3.8 v3.4 h-3.8 Z" fill="none" stroke="#d8d8d8" stroke-width="1.1" /><rect x="787" y="105.6" width="5.6" height="4.4" fill="#d8d8d8" /><path d="M796.2 108 Q802.6 103.4 800.4 97.4 Q799.4 95.6 797.4 95.6" fill="none" stroke="#d8d8d8" stroke-width="1.3" /><path d="M794.2 95.8 L798 93 L798.4 98.6 Z" fill="#d8d8d8" /><rect x="782.6" y="134.2" width="1.8" height="1.7" fill="#d8d8d8" /><rect x="785.6" y="134.4" width="4.4" height="1.2" fill="#d8d8d8" /><rect x="782.6" y="137.6" width="1.8" height="1.7" fill="#d8d8d8" /><rect x="785.6" y="137.8" width="4.4" height="1.2" fill="#d8d8d8" /><rect x="782.6" y="141" width="1.8" height="1.7" fill="#d8d8d8" /><rect x="785.6" y="141.2" width="4.4" height="1.2" fill="#d8d8d8" /><circle cx="797" cy="139" r="3.3" fill="#d8d8d8"/><path d="M795.8 141 H798.2 L798.8 145 H795.2 Z" fill="#d8d8d8" /><path d="M791.4 148 V146.6 Q791.4 145 793 145 H801 Q802.6 145 802.6 146.6 V148 Z" fill="#d8d8d8" /><rect x="792.4" y="149.2" width="9.2" height="1.1" fill="#d8d8d8" /><text x="786.2" y="189.2" font-size="18" fill="#d8d8d8" stroke="#d8d8d8" stroke-width="0.16" textLength="13.2" lengthAdjust="spacingAndGlyphs" >A</text><rect x="800.2" y="175.4" width="1" height="16.2" fill="#d8d8d8" /><path d="M798.4 204.2 H792.6 Q788.4 204.2 788.4 208 Q788.4 211.8 792.6 211.8 H794.2 V218.6 H795.4 V205.4 H797.2 V218.6 H798.4 Z" fill="#d8d8d8" /><path d="M801.1 245.8 L794.4 253.8" fill="none" stroke="#d8d8d8" stroke-width="1.2" stroke-linecap="round"/><path d="M793.6 254.6 L787 260" fill="none" stroke="#d8d8d8" stroke-width="3.6" stroke-linecap="round"/><path d="M789.4 249.6 L798.6 255.2" fill="none" stroke="#d8d8d8" stroke-width="2" /><path d="M785 245.4 Q788.2 244 790.2 246 Q791.4 247.6 790.6 250 L788.6 251 Q786.2 251.4 784.6 249.4 L787.2 248.8 L787.4 246.6 Z" fill="#d8d8d8" /><circle cx="800.9" cy="255.8" r="2" fill="#535353" stroke="#d8d8d8" stroke-width="1.3"/><path d="M788.6 300.4 Q783 299.8 783.2 294.6 Q783.6 290.2 788.2 289.6 Q790.6 285.4 795.4 285.6 Q799.8 285.8 801.4 289.8 Q804.4 291.2 804.2 295 Q803.8 300 798.8 300.4 Z" fill="#b2b2b2" stroke="#d6d6d6" stroke-width="1.1" /><path d="M787.8 297.6 Q785.4 295.4 787 293 Q788.6 291.4 790.6 292.8 L796.4 297.8 Q799.4 299 800.8 296.2 Q801.6 293.2 798.8 291.8 Q798.4 288.4 795 288 Q791.6 288 790.6 291" fill="none" stroke="#5a5a5a" stroke-width="1.1" /></svg></div>
<div class="p properties" style="left:814px;top:78px;width:302px;height:345px;background:#535353"><svg width="302" height="345" viewBox="814 78 302 345"><rect x="814" y="78" width="302" height="27" fill="#424242" /><rect x="814" y="78" width="66" height="27" fill="#535353" /><rect x="880" y="78" width="1" height="27" fill="#383838"/><rect x="814" y="105" width="302" height="318" fill="#535353" /><text x="823.3" y="94.9" font-size="9.6" fill="#f4f4f4" font-weight="bold" stroke="#f4f4f4" stroke-width="0.16" textLength="46.9" lengthAdjust="spacingAndGlyphs" >Properties</text><rect x="1099" y="88" width="11" height="1" fill="#c6c6c6" /><rect x="1099" y="90.3" width="11" height="1" fill="#c6c6c6" /><rect x="1099" y="92.6" width="11" height="1" fill="#c6c6c6" /><rect x="1099" y="94.9" width="11" height="1" fill="#c6c6c6" /><rect x="825" y="112" width="22" height="22" rx="3" fill="#383838" stroke="#404040" stroke-width="1" /><text x="829.7" y="128.1" font-size="15.6" fill="#e2e2e2" font-weight="bold" class="serif" stroke="#e2e2e2" stroke-width="0.16" textLength="10.6" lengthAdjust="spacingAndGlyphs" >T</text><text x="853.4" y="127.2" font-size="9.6" fill="#cdcdcd" font-weight="bold" stroke="#cdcdcd" stroke-width="0.16" textLength="108.5" lengthAdjust="spacingAndGlyphs" >Type Layer Properties</text><rect x="814" y="139" width="302" height="1" fill="#444444"/><rect x="1100" y="140" width="16" height="258" fill="#4a4a4a" /><text x="826.6" y="163" font-size="9.6" fill="#848484" stroke="#848484" stroke-width="0.16" textLength="11" lengthAdjust="spacingAndGlyphs" >W:</text><rect x="844.5" y="151.5" width="61" height="16" rx="0" fill="#505050" stroke="#626262" stroke-width="1" /><text x="848.1" y="163" font-size="9.6" fill="#808080" stroke="#808080" stroke-width="0.16" textLength="28.7" lengthAdjust="spacingAndGlyphs" >6.66 in</text><path d="M925 156.6 A3.2 3.2 0 1 0 925 160.4 M927 156.6 A3.2 3.2 0 1 1 927 160.4 M923 158.5 H929" fill="none" stroke="#b8b8b8" stroke-width="1.25"/><text x="948.9" y="163" font-size="9.6" fill="#848484" stroke="#848484" stroke-width="0.16" textLength="10.3" lengthAdjust="spacingAndGlyphs" >H:</text><rect x="965.5" y="151.5" width="61" height="16" rx="0" fill="#505050" stroke="#626262" stroke-width="1" /><text x="969.4" y="163" font-size="9.6" fill="#808080" stroke="#808080" stroke-width="0.16" textLength="28.7" lengthAdjust="spacingAndGlyphs" >6.66 in</text><text x="828.8" y="189" font-size="9.6" fill="#dddddd" stroke="#dddddd" stroke-width="0.16" textLength="8.8" lengthAdjust="spacingAndGlyphs" >X:</text><rect x="844.5" y="177.5" width="61" height="16" rx="0" fill="#454545" stroke="#636363" stroke-width="1" /><text x="848.1" y="189" font-size="9.6" fill="#f4f4f4" stroke="#f4f4f4" stroke-width="0.16" textLength="28.2" lengthAdjust="spacingAndGlyphs" >5.55 in</text><text x="949" y="189" font-size="9.6" fill="#dddddd" stroke="#dddddd" stroke-width="0.16" textLength="9.3" lengthAdjust="spacingAndGlyphs" >Y:</text><rect x="964.5" y="177.5" width="61" height="16" rx="0" fill="#454545" stroke="#636363" stroke-width="1" /><text x="968.2" y="189" font-size="9.6" fill="#f4f4f4" stroke="#f4f4f4" stroke-width="0.16" textLength="28.2" lengthAdjust="spacingAndGlyphs" >5.55 in</text><rect x="818" y="202" width="278" height="1" fill="#444444"/><rect x="822" y="212" width="146" height="18" rx="3" fill="#454545" stroke="#636363" stroke-width="1" /><rect x="951" y="213" width="1" height="16" fill="#636363"/><text x="827.1" y="224.8" font-size="9.6" fill="#f4f4f4" stroke="#f4f4f4" stroke-width="0.16" textLength="63.8" lengthAdjust="spacingAndGlyphs" >League Gothic</text><path d="M955.9 219.8 L959.4 223.4 L962.9 219.8" fill="none" stroke="#cfcfcf" stroke-width="1" stroke-linecap="round" stroke-linejoin="round"/><text x="829.2" y="257.7" font-size="18.8" fill="#d8d8d8" class="serif" textLength="11.2" lengthAdjust="spacingAndGlyphs" stroke="#d8d8d8" stroke-width="0.6">T</text><text x="823.3" y="257.7" font-size="8.4" fill="#d8d8d8" class="serif" textLength="6.4" lengthAdjust="spacingAndGlyphs" stroke="#d8d8d8" stroke-width="0.5">T</text><rect x="846" y="244" width="72" height="17" rx="3" fill="#454545" stroke="#636363" stroke-width="1" /><rect x="902" y="245" width="1" height="15" fill="#636363"/><text x="851.1" y="256.4" font-size="9.6" fill="#f4f4f4" stroke="#f4f4f4" stroke-width="0.16" textLength="22.3" lengthAdjust="spacingAndGlyphs" >72 pt</text><path d="M906.9 251.2 L910.4 254.8 L913.9 251.2" fill="none" stroke="#cfcfcf" stroke-width="1" stroke-linecap="round" stroke-linejoin="round"/><rect x="951" y="244" width="76" height="17" rx="3" fill="#454545" stroke="#636363" stroke-width="1" /><rect x="1010" y="245" width="1" height="15" fill="#636363"/><text x="956" y="256.4" font-size="9.6" fill="#f4f4f4" stroke="#f4f4f4" stroke-width="0.16" textLength="34" lengthAdjust="spacingAndGlyphs" >Regular</text><path d="M1015.1 251.2 L1018.6 254.8 L1022.1 251.2" fill="none" stroke="#cfcfcf" stroke-width="1" stroke-linecap="round" stroke-linejoin="round"/><rect x="820" y="276" width="24" height="25" rx="3" fill="#383838" /><rect x="825" y="281" width="14.5" height="1" fill="#e0e0e0" /><rect x="825" y="283" width="10.5" height="1" fill="#e0e0e0" /><rect x="825" y="285" width="14.5" height="1" fill="#e0e0e0" /><rect x="825" y="287" width="10.5" height="1" fill="#e0e0e0" /><rect x="825" y="289" width="14.5" height="1" fill="#e0e0e0" /><rect x="825" y="291" width="10.5" height="1" fill="#e0e0e0" /><rect x="825" y="293" width="14.5" height="1" fill="#e0e0e0" /><rect x="853.5" y="281" width="9.5" height="1" fill="#e0e0e0" /><rect x="851" y="283" width="14.5" height="1" fill="#e0e0e0" /><rect x="853.5" y="285" width="9.5" height="1" fill="#e0e0e0" /><rect x="851" y="287" width="14.5" height="1" fill="#e0e0e0" /><rect x="853.5" y="289" width="9.5" height="1" fill="#e0e0e0" /><rect x="851" y="291" width="14.5" height="1" fill="#e0e0e0" /><rect x="853.5" y="293" width="9.5" height="1" fill="#e0e0e0" /><rect x="876.6" y="281" width="14.6" height="1" fill="#e0e0e0" /><rect x="880.6" y="283" width="10.6" height="1" fill="#e0e0e0" /><rect x="876.6" y="285" width="14.6" height="1" fill="#e0e0e0" /><rect x="880.6" y="287" width="10.6" height="1" fill="#e0e0e0" /><rect x="876.6" y="289" width="14.6" height="1" fill="#e0e0e0" /><rect x="880.6" y="291" width="10.6" height="1" fill="#e0e0e0" /><rect x="876.6" y="293" width="14.6" height="1" fill="#e0e0e0" /><text x="823" y="323" font-size="9.6" fill="#dddddd" stroke="#dddddd" stroke-width="0.16" textLength="25" lengthAdjust="spacingAndGlyphs" >Color:</text><rect x="858.5" y="311.5" width="27" height="17" rx="0" fill="#000" stroke="#6a6a6a" stroke-width="1" /><rect x="818" y="337" width="278" height="1" fill="#444444"/><rect x="886" y="347" width="78" height="19" rx="3" fill="#454545" stroke="#636363" stroke-width="1" /><text x="898.2" y="360.2" font-size="9.6" fill="#f4f4f4" stroke="#f4f4f4" stroke-width="0.16" textLength="53.2" lengthAdjust="spacingAndGlyphs" >Advanced...</text></svg></div>
<div class="p layers" style="left:814px;top:425px;width:302px;height:347px;background:#535353"><svg width="302" height="347" viewBox="814 425 302 347"><rect x="814" y="425" width="302" height="29" fill="#424242" /><rect x="814" y="454" width="302" height="318" fill="#535353" /><rect x="848" y="425" width="47" height="29" fill="#535353" /><rect x="847" y="425" width="1" height="29" fill="#383838"/><rect x="895" y="425" width="1" height="29" fill="#383838"/><rect x="955" y="425" width="1" height="29" fill="#383838"/><rect x="1000" y="425" width="1" height="29" fill="#383838"/><text x="823.3" y="443.4" font-size="9.6" fill="#a0a0a0" stroke="#a0a0a0" stroke-width="0.16" textLength="12.9" lengthAdjust="spacingAndGlyphs" >3D</text><text x="857.5" y="443.4" font-size="9.6" fill="#f4f4f4" font-weight="bold" stroke="#f4f4f4" stroke-width="0.16" textLength="27.6" lengthAdjust="spacingAndGlyphs" >Layers</text><text x="904.4" y="443.4" font-size="9.6" fill="#a0a0a0" stroke="#a0a0a0" stroke-width="0.16" textLength="40.9" lengthAdjust="spacingAndGlyphs" >Channels</text><text x="965.5" y="443.4" font-size="9.6" fill="#a0a0a0" stroke="#a0a0a0" stroke-width="0.16" textLength="24.8" lengthAdjust="spacingAndGlyphs" >Paths</text><rect x="1099" y="436.2" width="11" height="1" fill="#c6c6c6" /><rect x="1099" y="438.5" width="11" height="1" fill="#c6c6c6" /><rect x="1099" y="440.8" width="11" height="1" fill="#c6c6c6" /><rect x="1099" y="443.1" width="11" height="1" fill="#c6c6c6" /><rect x="818" y="462.5" width="89" height="18" rx="3" fill="#454545" stroke="#636363" stroke-width="1" /><circle cx="832.6" cy="469.4" r="3.3" fill="none" stroke="#d8d8d8" stroke-width="1.4"/><path d="M830 472.2 L826.8 475.4" fill="none" stroke="#d8d8d8" stroke-width="1.9" stroke-linecap="round"/><text x="839.8" y="475" font-size="9.6" fill="#f4f4f4" stroke="#f4f4f4" stroke-width="0.16" textLength="19.4" lengthAdjust="spacingAndGlyphs" >Kind</text><path d="M896.7 470.2 L900.2 473.8 L903.7 470.2" fill="none" stroke="#cfcfcf" stroke-width="1" stroke-linecap="round" stroke-linejoin="round"/><path d="M918.4 467.2 H929.6 V475.8 H918.4 Z" fill="none" stroke="#d8d8d8" stroke-width="1.2" /><path d="M920 474.4 L922.6 470.6 L924.4 472.8 L925.8 471.4 L928 474.4 Z" fill="#d8d8d8" /><circle cx="948.4" cy="471.6" r="5" fill="none" stroke="#d8d8d8" stroke-width="1.2"/><path d="M952 468 A5 5 0 0 1 944.9 475.2 Z" fill="#d8d8d8" /><text x="967.4" y="476.6" font-size="15.6" fill="#d8d8d8" font-weight="bold" class="serif" stroke="#d8d8d8" stroke-width="0.16" textLength="11.2" lengthAdjust="spacingAndGlyphs" >T</text><rect x="992.5" y="467.7" width="8.4" height="8.4" fill="none" stroke="#d8d8d8" stroke-width="1.1"/><rect x="991.2" y="466.4" width="2.6" height="2.6" fill="#535353" stroke="#d8d8d8" stroke-width="0.9"/><rect x="991.2" y="474.8" width="2.6" height="2.6" fill="#535353" stroke="#d8d8d8" stroke-width="0.9"/><rect x="999.6" y="466.4" width="2.6" height="2.6" fill="#535353" stroke="#d8d8d8" stroke-width="0.9"/><rect x="999.6" y="474.8" width="2.6" height="2.6" fill="#535353" stroke="#d8d8d8" stroke-width="0.9"/><path d="M1019.4 466.4 H1023.4 L1026 469 V476.4 H1019.4 Z" fill="none" stroke="#d8d8d8" stroke-width="1.1" /><path d="M1023 466.4 V469.4 H1026" fill="none" stroke="#d8d8d8" stroke-width="1" /><rect x="1016" y="471.4" width="6" height="5.8" fill="#d8d8d8" /><rect x="1039.7" y="463" width="8.2" height="17" rx="4.1" fill="#4a4a4a" stroke="#666" stroke-width="0.9"/><circle cx="1043.8" cy="467" r="3.9" fill="#e0e0e0"/><rect x="814" y="485" width="302" height="1" fill="#494949"/><rect x="818" y="489.5" width="130" height="18" rx="3" fill="#454545" stroke="#636363" stroke-width="1" /><text x="826" y="502.2" font-size="9.6" fill="#f4f4f4" stroke="#f4f4f4" stroke-width="0.16" textLength="31.5" lengthAdjust="spacingAndGlyphs" >Normal</text><path d="M938.1 497.2 L941.6 500.8 L945.1 497.2" fill="none" stroke="#cfcfcf" stroke-width="1" stroke-linecap="round" stroke-linejoin="round"/><text x="956.4" y="502.2" font-size="9.6" fill="#dddddd" stroke="#dddddd" stroke-width="0.16" textLength="35.9" lengthAdjust="spacingAndGlyphs" >Opacity:</text><rect x="997" y="489.5" width="51" height="18" rx="3" fill="#454545" stroke="#636363" stroke-width="1" /><rect x="1032" y="490.5" width="1" height="16" fill="#636363"/><text x="1001.4" y="502.2" font-size="9.6" fill="#f4f4f4" stroke="#f4f4f4" stroke-width="0.16" textLength="24.6" lengthAdjust="spacingAndGlyphs" >100%</text><path d="M1036.9 497.2 L1040.4 500.8 L1043.9 497.2" fill="none" stroke="#cfcfcf" stroke-width="1" stroke-linecap="round" stroke-linejoin="round"/><rect x="814" y="511" width="302" height="1" fill="#494949"/><text x="820.2" y="529" font-size="9.6" fill="#dddddd" stroke="#dddddd" stroke-width="0.16" textLength="22.9" lengthAdjust="spacingAndGlyphs" >Lock:</text><path d="M853.4 520.6 H863.4 V530.6 H853.4 Z" fill="none" stroke="#9a9a9a" stroke-width="1" /><rect x="853.9" y="521.1" width="3" height="3" fill="#9a9a9a" /><rect x="853.9" y="527.1" width="3" height="3" fill="#9a9a9a" /><rect x="856.9" y="524.1" width="3" height="3" fill="#9a9a9a" /><rect x="859.9" y="521.1" width="3" height="3" fill="#9a9a9a" /><rect x="859.9" y="527.1" width="3" height="3" fill="#9a9a9a" /><path d="M886.4 520 Q887.6 519.8 887.4 521.2 L882.6 528.6 L880 526.6 Z" fill="#909090" /><path d="M879.6 527 L882.2 529 Q882 531.6 879 532.2 Q876.6 532.8 874.4 532.4 Q876.2 531.2 876.6 529.6 Q877.2 527 879.6 527 Z" fill="#909090" /><path d="M902.6 521 V531 M897.6 526 H907.6" fill="none" stroke="#d8d8d8" stroke-width="1.2" /><path d="M902.6 519.4 l2.4 2.8 h-4.8 Z M902.6 532.6 l2.4 -2.8 h-4.8 Z M896.0 526 l2.8 -2.4 v4.8 Z M909.2 526 l-2.8 -2.4 v4.8 Z" fill="#d8d8d8" /><path d="M920.7 519.6 V532.2 M917.8 522.3 H927 L930 525.3 V532.2 M917.8 529 H932.4" fill="none" stroke="#d8d8d8" stroke-width="1.1" /><path d="M929.6 521.6 l1.8 -1.6" fill="none" stroke="#d8d8d8" stroke-width="1" /><rect x="942" y="525" width="10" height="7.4" fill="#d8d8d8" /><path d="M944.2 525 V522.8 Q944.2 520.2 947 520.2 Q949.8 520.2 949.8 522.8 V525" fill="none" stroke="#d8d8d8" stroke-width="1.3" /><rect x="946.4" y="527.4" width="1.2" height="2.6" fill="#555" /><text x="977.9" y="529" font-size="9.6" fill="#dddddd" stroke="#dddddd" stroke-width="0.16" textLength="14.4" lengthAdjust="spacingAndGlyphs" >Fill:</text><rect x="997" y="516.5" width="51" height="18" rx="3" fill="#454545" stroke="#636363" stroke-width="1" /><rect x="1032" y="517.5" width="1" height="16" fill="#636363"/><text x="1001.4" y="529.2" font-size="9.6" fill="#f4f4f4" stroke="#f4f4f4" stroke-width="0.16" textLength="24.6" lengthAdjust="spacingAndGlyphs" >100%</text><path d="M1036.9 524.2 L1040.4 527.8 L1043.9 524.2" fill="none" stroke="#cfcfcf" stroke-width="1" stroke-linecap="round" stroke-linejoin="round"/><rect x="814" y="540" width="302" height="1" fill="#444444"/><rect x="1100" y="541" width="16" height="206" fill="#4a4a4a" /><rect x="845" y="580" width="255" height="38" fill="#6b6b6b" /><rect x="814" y="579" width="286" height="1" fill="#464646"/><rect x="814" y="618" width="286" height="1" fill="#464646"/><rect x="814" y="657" width="286" height="1" fill="#464646"/><rect x="814" y="696" width="286" height="1" fill="#464646"/><rect x="814" y="735" width="286" height="1" fill="#464646"/><rect x="844" y="541" width="1" height="195" fill="#464646"/><path d="M823.0 560.6 Q829.6 553.0 836.2 560.6 Q829.6 568.2 823.0 560.6 Z" fill="#e2e2e2" /><circle cx="829.6" cy="560.4" r="2.8" fill="#4c4c4c"/><circle cx="828.6" cy="559.4" r="0.8" fill="#e2e2e2"/><path d="M823.0 599.6 Q829.6 592.0 836.2 599.6 Q829.6 607.2 823.0 599.6 Z" fill="#e2e2e2" /><circle cx="829.6" cy="599.4" r="2.8" fill="#4c4c4c"/><circle cx="828.6" cy="598.4" r="0.8" fill="#e2e2e2"/><rect x="823.4" y="632" width="11.4" height="11.6" rx="1" fill="none" stroke="#626262" stroke-width="1" /><rect x="823.4" y="671" width="11.4" height="11.6" rx="1" fill="none" stroke="#626262" stroke-width="1" /><rect x="823.4" y="710" width="11.4" height="11.6" rx="1" fill="none" stroke="#626262" stroke-width="1" /><text x="857.6" y="567.4" font-size="20.4" fill="#dcdcdc" class="serif" textLength="13.2" lengthAdjust="spacingAndGlyphs" stroke="#dcdcdc" stroke-width="0.5">T</text><text x="857.6" y="606.4" font-size="20.4" fill="#e8e8e8" class="serif" textLength="13.2" lengthAdjust="spacingAndGlyphs" stroke="#e8e8e8" stroke-width="0.5">T</text><path d="M846.5 593.0 V581.5 H858.0 M870.1 581.5 H881.6 V593.0 M881.6 605.0 V616.5 H870.1 M858.0 616.5 H846.5 V605.0" fill="none" stroke="#f0f0f0" stroke-width="1" /><text x="890.2" y="564.9" font-size="9.6" fill="#ececec" stroke="#ececec" stroke-width="0.16" textLength="82.4" lengthAdjust="spacingAndGlyphs" >WRAP YOUR TEXT</text><text x="890.2" y="603.9" font-size="9.6" fill="#f8f8f8" stroke="#f8f8f8" stroke-width="0.16" textLength="84.6" lengthAdjust="spacingAndGlyphs" >AROUND A CIRCLE</text><text x="890.2" y="643.2" font-size="9.6" fill="#ececec" stroke="#ececec" stroke-width="0.16" textLength="36.1" lengthAdjust="spacingAndGlyphs" >Ellipse 2</text><text x="890.2" y="682.1" font-size="9.6" fill="#ececec" stroke="#ececec" stroke-width="0.16" textLength="36.1" lengthAdjust="spacingAndGlyphs" >Ellipse 1</text><text x="890.2" y="721.1" font-size="9.6" fill="#ececec" font-style="italic" stroke="#ececec" stroke-width="0.16" textLength="54.5" lengthAdjust="spacingAndGlyphs" >Background</text><defs><pattern id="chk2" x="848.5" y="622.8" width="6.2" height="6.2" patternUnits="userSpaceOnUse"><rect width="6.2" height="6.2" fill="#ffffff"/><rect x="3.1" width="3.1" height="3.1" fill="#cccccc"/><rect y="3.1" width="3.1" height="3.1" fill="#cccccc"/></pattern></defs><clipPath id="tc0"><path d="M848.5 622.8 H879.5 V641 H866.6 V653.2 H848.5 Z"/></clipPath><path d="M848.5 622.8 H879.5 V641 H866.6 V653.2 H848.5 Z" fill="url(#chk2)" stroke="#262626" stroke-width="1.1" stroke-linejoin="miter"/><g clip-path="url(#tc0)"><path d="M859.4 641 Q860.4 632.6 866 631.2 Q872 630.4 880 631.4 V641 Z" fill="#ffffff"/></g><rect x="869.9" y="643.9" width="8" height="8" fill="none" stroke="#e4e4e4" stroke-width="1.1"/><rect x="868.6" y="642.6" width="2.6" height="2.6" fill="#535353" stroke="#e4e4e4" stroke-width="0.9"/><rect x="868.6" y="650.6" width="2.6" height="2.6" fill="#535353" stroke="#e4e4e4" stroke-width="0.9"/><rect x="876.6" y="642.6" width="2.6" height="2.6" fill="#535353" stroke="#e4e4e4" stroke-width="0.9"/><rect x="876.6" y="650.6" width="2.6" height="2.6" fill="#535353" stroke="#e4e4e4" stroke-width="0.9"/><clipPath id="tc1"><path d="M848.5 661.8 H879.5 V680 H866.6 V692.2 H848.5 Z"/></clipPath><path d="M848.5 661.8 H879.5 V680 H866.6 V692.2 H848.5 Z" fill="url(#chk2)" stroke="#262626" stroke-width="1.1" stroke-linejoin="miter"/><g clip-path="url(#tc1)"><ellipse cx="863.2" cy="679.5" rx="3" ry="7.4" fill="#ffffff" transform="rotate(22 863.2 679.5)"/></g><rect x="869.9" y="682.9" width="8" height="8" fill="none" stroke="#e4e4e4" stroke-width="1.1"/><rect x="868.6" y="681.6" width="2.6" height="2.6" fill="#535353" stroke="#e4e4e4" stroke-width="0.9"/><rect x="868.6" y="689.6" width="2.6" height="2.6" fill="#535353" stroke="#e4e4e4" stroke-width="0.9"/><rect x="876.6" y="681.6" width="2.6" height="2.6" fill="#535353" stroke="#e4e4e4" stroke-width="0.9"/><rect x="876.6" y="689.6" width="2.6" height="2.6" fill="#535353" stroke="#e4e4e4" stroke-width="0.9"/><rect x="848" y="700.4" width="32.2" height="31.2" fill="#262626" /><rect x="849" y="701.4" width="30.2" height="29.2" fill="#ffffff" /><path d="M1074 715.4 H1083 V722.4 H1074 Z" fill="none" stroke="#d8d8d8" stroke-width="1.1" /><path d="M1075.8 715.4 V713.4 Q1075.8 711 1078.5 711 Q1081.2 711 1081.2 713.4 V715.4" fill="none" stroke="#d8d8d8" stroke-width="1.1" /><rect x="1077.8" y="717.6" width="1.4" height="2.6" fill="#d8d8d8" /><rect x="814" y="747" width="302" height="1" fill="#444444"/><path d="M918 757.6 A3.2 3.2 0 1 0 918 761.4 M920 757.6 A3.2 3.2 0 1 1 920 761.4 M916 759.5 H922" fill="none" stroke="#8c8c8c" stroke-width="1.25"/><text x="940.4" y="764.2" font-size="13.6" fill="#d8d8d8" font-style="italic" stroke="#d8d8d8" stroke-width="0.16" textLength="11.4" lengthAdjust="spacingAndGlyphs" >fx</text><path d="M953 767.4 L956.4 767.4 L954.7 769.4 Z" fill="#d8d8d8" /><rect x="965.4" y="753.6" width="13.6" height="11.4" fill="#d8d8d8" /><circle cx="972.2" cy="759.3" r="3.4" fill="#535353"/><circle cx="1000.4" cy="759.4" r="5.4" fill="none" stroke="#d8d8d8" stroke-width="1.2"/><path d="M1004.3 755.5 A5.4 5.4 0 0 1 996.6 763.3 Z" fill="#d8d8d8" /><path d="M1007 767.4 L1010.4 767.4 L1008.7 769.4 Z" fill="#d8d8d8" /><rect x="1021" y="755.8" width="12.2" height="8.2" fill="#d8d8d8" /><rect x="1021" y="754" width="6" height="1" fill="#d8d8d8" /><path d="M1052.8 764.2 H1058.2 V755.6 H1049.6 V761 Z" fill="none" stroke="#d8d8d8" stroke-width="1.2" /><path d="M1049.2 760.6 H1053.2 V764.6 Z" fill="#d8d8d8" /><path d="M1076.6 756.6 H1085 L1084.2 766 H1077.4 Z" fill="none" stroke="#d8d8d8" stroke-width="1.2" /><path d="M1075 755.6 H1086.4 M1078.8 755.4 V753.8 H1082.8 V755.4 M1079.2 758.4 V764 M1082.2 758.4 V764" fill="none" stroke="#d8d8d8" stroke-width="1.1" /></svg></div>
</div></body></html>
